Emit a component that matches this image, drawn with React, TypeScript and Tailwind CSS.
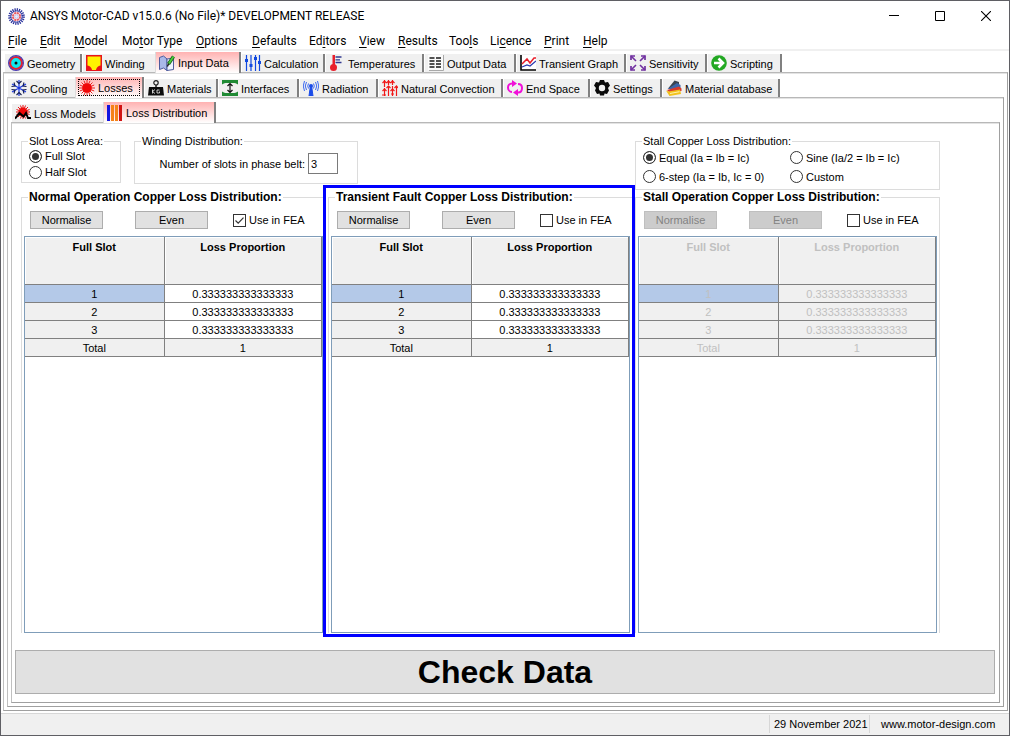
import { useState, type ReactNode } from "react";

type TabDef = { label: string; width: string; icon: ReactNode };

const Icon = ({ children }: { children: ReactNode }) => (
  <svg width="16" height="16" viewBox="0 0 16 16" fill="none" className="shrink-0" aria-hidden="true">
    {children}
  </svg>
);

const icons = {
  geometry: (
    <Icon>
      <circle cx="8" cy="8" r="6" fill="#10e8f0" stroke="#e8202c" strokeWidth="2.200" />
      <circle cx="8" cy="8" r="7.400" stroke="#4a3ab0" strokeWidth="1.200" />
      <circle cx="8" cy="8" r="1.500" fill="#111" />
    </Icon>
  ),
  winding: (
    <Icon>
      <path d="M0 0h16v16H0z" fill="#e8141c" />
      <path d="M1.500 1.500h13v9c-2.500 .5-4 2-4.500 4.500H6c-.5-2.500-2-4-4.500-4.500z" fill="#fff200" />
      <path d="M1 11.500c2.500 .5 4 1.500 4.500 3.500H1zM15 11.500c-2.500 .5-4 1.500-4.500 3.500H15z" fill="#e8141c" />
    </Icon>
  ),
  input: (
    <Icon>
      <path d="M.5 2.500l4-1.500 3.500 3v11.500l-3.500-2.500-4 1.500z" fill="#a9b8e8" stroke="#4c5a9c" />
      <path d="M8 4l6.500-1v11.500L8 15.500z" fill="#eef2ff" stroke="#4c5a9c" />
      <path d="M14.500 1.500L9.500 9" stroke="#1b5e20" strokeWidth="3.400" />
      <path d="M14.500 1.500L9.500 9" stroke="#4ccf3a" strokeWidth="1.800" />
      <path d="M9.800 8.500l-1.500 3" stroke="#222" strokeWidth="1.500" />
    </Icon>
  ),
  calculation: (
    <Icon>
      <path d="M1.500 0v16M6 0v16M10.500 0v16M14.500 0v16" stroke="#1048e0" strokeWidth="1.200" />
      <path d="M0 4h3v3H0zM4.500 9h3v3h-3zM9 2h3v3H9zM13 6h3v3h-3z" fill="#1048e0" />
    </Icon>
  ),
  temperatures: (
    <Icon>
      <path d="M3.500 0h2.500v11H3.500z" fill="#e8202c" />
      <circle cx="4.500" cy="12.500" r="3.500" fill="#e8202c" />
      <path d="M6.500 2h6M6.500 4.800h4.500M6.500 7.500h6" stroke="#303890" strokeWidth="1.300" />
    </Icon>
  ),
  output: (
    <Icon>
      <path d="M15.500 0v15.500H1" stroke="#a8a8a8" />
      <path d="M0 0h15v15H0z" fill="#fafafa" />
      <path d="M1.500 3h5M8 3h5M1.500 6h5M8 6h5M1.500 9h5M8 9h5M1.500 12h5M8 12h5" stroke="#181818" strokeWidth="1.700" />
    </Icon>
  ),
  transient: (
    <Icon>
      <path d="M0 0h16v16H0z" fill="#fff" />
      <path d="M1 0v15h15" stroke="#000" strokeWidth="1.600" />
      <path d="M2 12l5-2 3 1 6-5" stroke="#2838b0" strokeWidth="1.200" />
      <path d="M2 9l5-5 3 4 4-5h2" stroke="#e8202c" strokeWidth="1.500" />
    </Icon>
  ),
  sensitivity: (
    <Icon>
      <path d="M1 5V1h4M11 1h4v4M15 11v4h-4M5 15H1v-4" stroke="#7030a0" strokeWidth="1.700" />
      <path d="M1 1l5 5M15 1l-5 5M15 15l-5-5M1 15l5-5" stroke="#7030a0" strokeWidth="1.600" />
    </Icon>
  ),
  scripting: (
    <Icon>
      <circle cx="8" cy="8" r="7.800" fill="#23a823" />
      <path d="M3 8h8M7.500 3.500L12 8l-4.500 4.500" stroke="#fff" strokeWidth="2.600" />
    </Icon>
  ),
  cooling: (
    <Icon>
      <path d="M8 0v16M1 4l14 8M15 4L1 12" stroke="#1c38e0" strokeWidth="1.200" />
      <path d="M5.500 1L8 3.500 10.500 1M5.500 15L8 12.500l2.500 2.500M.5 6.500L4 6 3 2.500M15.500 9.500L12 10l1 3.500M15.500 6.500L12 6l1-3.500M.5 9.500L4 10l-1 3.500" stroke="#111c50" strokeWidth="1.100" />
    </Icon>
  ),
  losses: (
    <Icon>
      <path d="M8 0v16M0 8h16M2.500 2.500l11 11M13.500 2.500l-11 11M5 .8l6 14.400M11 .8L5 15.200M.8 5l14.400 6M.8 11l14.400-6" stroke="#e81010" strokeWidth=".9" />
      <circle cx="8" cy="8" r="4.800" fill="#f00808" />
    </Icon>
  ),
  materials: (
    <Icon>
      <circle cx="8" cy="2.800" r="2.200" stroke="#222" strokeWidth="1.200" />
      <path d="M8 5v3" stroke="#222" strokeWidth="1.500" />
      <path d="M1 7h14l1 8.500H0z" fill="#0c0c0c" />
      <path d="M4.500 9.500v4M7 9.500l-2.500 2 2.500 2M11.500 10H9v3h2.500v-1.500" stroke="#ddd" strokeWidth=".9" />
    </Icon>
  ),
  interfaces: (
    <Icon>
      <path d="M0 0h16v4.500C14 3 13 3 11 3H5C3 3 2 3 0 4.500zM0 16h16v-4.500c-2 1.500-3 1.500-5 1.500H5c-2 0-3 0-5-1.500z" fill="#1f8a34" />
      <path d="M8 4v8M5.500 6L8 3.500 10.500 6M5.500 10L8 12.500l2.500-2.500" stroke="#111" strokeWidth="1.200" />
    </Icon>
  ),
  radiation: (
    <Icon>
      <circle cx="8" cy="6" r="2" fill="#1c4ce8" />
      <path d="M7.200 7.500h1.600l1.200 8.500H6z" fill="#1c4ce8" stroke="#1c4ce8" />
      <path d="M5.500 3.500q-1.500 2.500 0 5M10.500 3.500q1.500 2.500 0 5M3.500 2q-2.500 4 0 8M12.500 2q2.500 4 0 8M1.500 1q-2.500 5 0 10M14.500 1q2.500 5 0 10" stroke="#3c68f0" />
    </Icon>
  ),
  convection: (
    <Icon>
      <path d="M2.500 16V8M6.500 16V6M10.500 16V6M14.500 16V6M2.500 7V0M6.500 5V0M10.500 5V0" stroke="#f01818" strokeWidth="1.200" />
      <path d="M.5 3l2-2 2 2M4.500 3l2-2 2 2M8.500 3l2-2 2 2M.5 11l2-2 2 2M4.500 8l2-2 2 2M8.500 11l2-2 2 2M12.500 8l2-2 1.500 2M0 15h4M9 14h3" stroke="#f01818" strokeWidth="1.200" />
    </Icon>
  ),
  endSpace: (
    <Icon>
      <path d="M5 3.500C2.500 3.500 1 5.500 1 7.500S2.500 12 5 12M11 12.500c2.500 0 4-2 4-4.500S13.500 4 11 4" stroke="#f010d8" strokeWidth="2" />
      <path d="M5 0l5 3.500L5 7zM11 9l-5 3.500 5 3.500z" fill="#f010d8" />
    </Icon>
  ),
  settings: (
    <Icon>
      <path
        fillRule="evenodd"
        d="M6 0h4l1 2.500 3-.5 2 3.500-2 2.500 1 2.500-2 3.500-2.500-.5-.5 2H6l-.5-2-2.500 .5L1 10.500 2 8 0 5.500 2 2l3 .5zM8 4.800a3.200 3.200 0 100 6.400 3.200 3.200 0 000-6.400z"
        fill="#0a0a0a"
      />
    </Icon>
  ),
  database: (
    <Icon>
      <path d="M2 8.500L8.500 .5l4.500 1.500v5z" fill="#3a4450" />
      <path d="M1.500 9L11 3l3.500 2v4H4z" fill="#3c66a8" />
      <path d="M1 10L13 6.500l2.500 2V11L3 12z" fill="#d83a2c" />
      <path d="M0 10.500l2.500 1L14 9.500l1 4.500-11.500 2z" fill="#f2c21c" />
      <path d="M4 13.500l9.500-1.800" stroke="#fff3b0" />
    </Icon>
  ),
  lossModels: (
    <Icon>
      <path d="M8 0v14M1 7h14M3 2l10 10M13 2L3 12M5.500 .5l5 13M10.500 .5l-5 13M1.500 4.500l13 5M1.500 9.500l13-5" stroke="#e81010" strokeWidth="1" />
      <circle cx="8" cy="7" r="4.500" fill="#f00808" />
      <path d="M0 13.500L4.500 8l4 3.500 2.500-3.500L13 13h3" stroke="#000" strokeWidth="2" />
    </Icon>
  ),
  lossDistribution: (
    <Icon>
      <path d="M0 0h3v16H0z" fill="#1414e0" />
      <path d="M4 0h3v16H4zM8 0h3v16H8z" fill="#f58216" />
      <path d="M12 0h3v16h-3z" fill="#d01414" />
    </Icon>
  ),
};

const mainTabs: TabDef[] = [
  { label: "Geometry", width: "w-[78px]", icon: icons.geometry },
  { label: "Winding", width: "w-[73px]", icon: icons.winding },
  { label: "Input Data", width: "w-[86px]", icon: icons.input },
  { label: "Calculation", width: "w-[84px]", icon: icons.calculation },
  { label: "Temperatures", width: "w-[99px]", icon: icons.temperatures },
  { label: "Output Data", width: "w-[92px]", icon: icons.output },
  { label: "Transient Graph", width: "w-[110px]", icon: icons.transient },
  { label: "Sensitivity", width: "w-[81px]", icon: icons.sensitivity },
  { label: "Scripting", width: "w-[75px]", icon: icons.scripting },
];

const inputTabs: TabDef[] = [
  { label: "Cooling", width: "w-[68px]", icon: icons.cooling },
  { label: "Losses", width: "w-[69px]", icon: icons.losses },
  { label: "Materials", width: "w-[74px]", icon: icons.materials },
  { label: "Interfaces", width: "w-[81px]", icon: icons.interfaces },
  { label: "Radiation", width: "w-[79px]", icon: icons.radiation },
  { label: "Natural Convection", width: "w-[125px]", icon: icons.convection },
  { label: "End Space", width: "w-[87px]", icon: icons.endSpace },
  { label: "Settings", width: "w-[72px]", icon: icons.settings },
  { label: "Material database", width: "w-[118px]", icon: icons.database },
];

const lossTabs: TabDef[] = [
  { label: "Loss Models", width: "w-[92px]", icon: icons.lossModels },
  { label: "Loss Distribution", width: "w-[113px]", icon: icons.lossDistribution },
];

const menus: { before: string; key: string; after: string; width: string }[] = [
  { before: "", key: "F", after: "ile", width: "w-8" },
  { before: "", key: "E", after: "dit", width: "w-[34px]" },
  { before: "", key: "M", after: "odel", width: "w-12" },
  { before: "Mo", key: "t", after: "or Type", width: "w-[74px]" },
  { before: "", key: "O", after: "ptions", width: "w-14" },
  { before: "", key: "D", after: "efaults", width: "w-[57px]" },
  { before: "Ed", key: "i", after: "tors", width: "w-[50px]" },
  { before: "", key: "V", after: "iew", width: "w-[39px]" },
  { before: "", key: "R", after: "esults", width: "w-[51px]" },
  { before: "Too", key: "l", after: "s", width: "w-[41px]" },
  { before: "Li", key: "c", after: "ence", width: "w-[54px]" },
  { before: "", key: "P", after: "rint", width: "w-[39px]" },
  { before: "", key: "H", after: "elp", width: "w-10" },
];

function TabRow({ tabs, initial, height, focused }: { tabs: TabDef[]; initial: number; height: string; focused?: boolean }) {
  const [active, setActive] = useState(initial);
  return (
    <div role="tablist" className={`flex items-end ${height}`}>
      {tabs.map((tab, i) => {
        const selected = i === active;
        return (
          <button
            key={tab.label}
            type="button"
            role="tab"
            aria-selected={selected}
            onClick={() => setActive(i)}
            className={`flex shrink-0 items-center gap-[3px] border-l pl-[3px] whitespace-nowrap ${tab.width} ${
              selected
                ? "relative -mb-px h-[21px] border-r-2 border-l-[#dcdcdc] border-r-[#808080] bg-linear-to-b from-[#ffb2b2] to-white"
                : i === active - 1
                  ? "h-[18px] border-l-white bg-[#f0f0f0]"
                  : "h-[18px] border-r-2 border-l-white border-r-[#808080] bg-[#f0f0f0]"
            }`}
          >
            {tab.icon}
            <span className="pt-px">{tab.label}</span>
            {selected && focused && (
              <span className="absolute inset-x-[2px] top-[2px] bottom-[2px] border border-dotted border-black" />
            )}
          </button>
        );
      })}
    </div>
  );
}

function Page({ children }: { children: ReactNode }) {
  return (
    <div className="flex flex-1 flex-col border border-t-[#b8b8b8] border-r-[#a0a0a0] border-b-[#a0a0a0] border-l-[#c0c0c0] shadow-[inset_0_1px_0_#e3e3e3]">
      {children}
    </div>
  );
}

function Radio({ name, label, defaultChecked }: { name: string; label: string; defaultChecked?: boolean }) {
  return (
    <label className="flex items-center gap-[3px]">
      <input
        type="radio"
        name={name}
        defaultChecked={defaultChecked}
        className="size-[13px] appearance-none rounded-full border border-[#333] bg-white checked:bg-[#333] checked:shadow-[inset_0_0_0_2px_#fff]"
      />
      {label}
    </label>
  );
}

function GroupBox({ title, bold, className, children }: { title: string; bold?: boolean; className: string; children: ReactNode }) {
  return (
    <fieldset className={`min-w-0 border border-[#dcdcdc] ${className}`}>
      <legend className={`ml-[6px] px-px leading-[14px] whitespace-nowrap ${bold ? "text-[12px] font-bold" : ""}`}>{title}</legend>
      {children}
    </fieldset>
  );
}

const rows = [
  ["1", "0.333333333333333"],
  ["2", "0.333333333333333"],
  ["3", "0.333333333333333"],
];

function LossPanel({ title, useInFea, disabled, highlighted }: { title: string; useInFea?: boolean; disabled?: boolean; highlighted?: boolean }) {
  const button =
    "h-[18px] w-[73px] border border-[#adadad] bg-[#e1e1e1] disabled:border-[#bfbfbf] disabled:bg-[#cccccc] disabled:text-[#838383]";
  return (
    <div className="relative flex flex-col">
      <GroupBox title={title} bold className="flex flex-1 flex-col border-b-0">
        <div className="flex h-8 items-center pl-2">
          <button type="button" disabled={disabled} className={button}>
            Normalise
          </button>
          <button type="button" disabled={disabled} className={`ml-8 ${button}`}>
            Even
          </button>
          <label className="relative ml-[25px] flex items-center gap-[3px]">
            <input type="checkbox" defaultChecked={useInFea} className="peer size-[13px] appearance-none border border-[#333] bg-white" />
            <svg width="13" height="13" viewBox="0 0 13 13" fill="none" className="absolute left-0 hidden peer-checked:block" aria-hidden="true">
              <path d="M2.500 6.500l2.700 2.700 5.300-5.500" stroke="#333" strokeWidth="1.200" />
            </svg>
            Use in FEA
          </label>
        </div>
        <div className={`mx-[2px] flex-1 border border-[#7f9db9] bg-white ${disabled ? "text-[#c0c0c0]" : ""}`}>
          <table className="w-full table-fixed border-separate border-spacing-0 text-center">
            <thead>
              <tr className="h-12 bg-[#f0f0f0] align-top">
                <th className="w-[47%] border-r border-b border-[#808080] p-0 pt-[3px] leading-[14px] shadow-[inset_1px_1px_0_#fff]">Full Slot</th>
                <th className="border-r border-b border-[#808080] p-0 pt-[3px] leading-[14px] shadow-[inset_1px_1px_0_#fff]">Loss Proportion</th>
              </tr>
            </thead>
            <tbody>
              {rows.map(([slot, value], i) => (
                <tr key={slot} className="h-[18px]">
                  <td className={`border-r border-b border-[#808080] p-0 pt-[2px] leading-[15px] ${i === 0 ? "bg-[#b4c9e8]" : "bg-[#f0f0f0]"}`}>{slot}</td>
                  <td className={`border-r border-b border-[#808080] p-0 pt-[2px] leading-[15px] ${disabled ? "bg-[#f0f0f0]" : "bg-white"}`}>{value}</td>
                </tr>
              ))}
              <tr className="h-[18px] bg-[#f0f0f0]">
                <td className="border-r border-b border-[#808080] p-0 pt-[2px] leading-[15px]">Total</td>
                <td className="border-r border-b border-[#808080] p-0 pt-[2px] leading-[15px]">1</td>
              </tr>
            </tbody>
          </table>
        </div>
      </GroupBox>
      {highlighted && <div className="pointer-events-none absolute -top-[5px] -right-[2px] -bottom-[4px] -left-[5px] z-10 border-3 border-[#0000ff]" />}
    </div>
  );
}

export default function App() {
  return (
    <div className="flex min-h-screen flex-col border border-[#5f5f64] bg-white font-['Liberation_Sans',Arial,sans-serif] text-[11px] leading-[14px] text-black">
      <header className="font-[Roboto,'Segoe_UI',sans-serif] text-[12px] leading-4">
        <div className="flex h-[30px] items-center pl-[7px]">
          <svg width="17" height="17" viewBox="0 0 17 17" fill="none" aria-hidden="true">
            <circle cx="8.500" cy="8.500" r="6.800" stroke="#28309c" strokeWidth="3" strokeDasharray="1.200 .936" />
            <circle cx="8.500" cy="8.500" r="5.600" stroke="#28309c" strokeWidth=".8" />
            <circle cx="8.500" cy="8.500" r="3.600" fill="#fff" stroke="#e86068" strokeWidth="2" strokeDasharray="2.200 .600" />
            <circle cx="8.500" cy="8.500" r="1.800" fill="#e8ecff" stroke="#b0b8e8" strokeWidth=".8" />
          </svg>
          <h1 className="ml-[5px]">ANSYS Motor-CAD v15.0.6 (No File)* DEVELOPMENT RELEASE</h1>
          <div className="ml-auto flex h-full">
            <button type="button" aria-label="Minimise" className="flex w-[46px] items-center justify-center">
              <svg width="10" height="10" viewBox="0 0 10 10" aria-hidden="true">
                <path d="M0 4.500h10" stroke="#000" />
              </svg>
            </button>
            <button type="button" aria-label="Maximise" className="flex w-[46px] items-center justify-center">
              <svg width="10" height="10" viewBox="0 0 10 10" fill="none" aria-hidden="true">
                <path d="M.5 .5h9v9h-9z" stroke="#000" />
              </svg>
            </button>
            <button type="button" aria-label="Close" className="flex w-[46px] items-center justify-center">
              <svg width="10" height="10" viewBox="0 0 10 10" aria-hidden="true">
                <path d="M0 0l10 10M10 0L0 10" stroke="#000" strokeWidth="1.100" />
              </svg>
            </button>
          </div>
        </div>
        <nav className="flex h-5 items-center border-b-2 border-[#f0f0f0] pt-[2px] pl-[7px]">
          {menus.map((m) => (
            <button key={m.before + m.key + m.after} type="button" className={`shrink-0 text-left whitespace-nowrap ${m.width}`}>
              {m.before}
              <span className="underline underline-offset-2">{m.key}</span>
              {m.after}
            </button>
          ))}
        </nav>
      </header>

      <main className="flex flex-1 flex-col px-[2px] pr-px pb-[2px]">
        <div className="pl-px">
          <TabRow tabs={mainTabs} initial={2} height="h-[21px]" />
        </div>
        <Page>
          <div className="flex flex-1 flex-col px-[3px] pb-[3px]">
            <TabRow tabs={inputTabs} initial={1} height="h-6" focused />
            <Page>
              <div className="flex flex-1 flex-col px-[3px] pb-[3px]">
                <TabRow tabs={lossTabs} initial={1} height="h-6" />
                <Page>
                  <div className="grid h-[67px] grid-cols-3 gap-[2px] pt-[11px] pr-[59px] pl-[9px]">
                    <div className="col-span-2 flex items-start gap-[13px]">
                      <GroupBox title="Slot Loss Area:" className="w-[100px] pb-[2px]">
                        <div className="grid auto-rows-[16px] pl-[7px]">
                          <Radio name="area" label="Full Slot" defaultChecked />
                          <Radio name="area" label="Half Slot" />
                        </div>
                      </GroupBox>
                      <GroupBox title="Winding Distribution:" className="w-[224px] pb-[9px]">
                        <label className="flex items-center justify-end gap-[3px] pt-[5px] pr-[19px]">
                          Number of slots in phase belt:
                          <input type="text" defaultValue="3" className="h-[21px] w-[30px] border border-[#7a7a7a] bg-white pl-[2px]" />
                        </label>
                      </GroupBox>
                    </div>
                    <div>
                      <GroupBox title="Stall Copper Loss Distribution:" className="pb-[3px]">
                        <div className="grid auto-rows-[19px] grid-cols-[147px_1fr] pl-[7px] whitespace-nowrap">
                          <Radio name="stall" label="Equal (Ia = Ib = Ic)" defaultChecked />
                          <Radio name="stall" label="Sine (Ia/2 = Ib = Ic)" />
                          <Radio name="stall" label="6-step (Ia = Ib, Ic = 0)" />
                          <Radio name="stall" label="Custom" />
                        </div>
                      </GroupBox>
                    </div>
                  </div>
                  <div className="grid flex-1 grid-cols-3 gap-[2px] pr-[59px] pl-[9px]">
                    <LossPanel title="Normal Operation Copper Loss Distribution:" useInFea />
                    <LossPanel title="Transient Fault Copper Loss Distribution:" highlighted />
                    <LossPanel title="Stall Operation Copper Loss Distribution:" disabled />
                  </div>
                  <div className="pt-[17px] pr-1 pb-2 pl-[3px]">
                    <button type="button" className="h-11 w-full border border-[#adadad] bg-[#e1e1e1] text-[32px] font-bold">
                      Check Data
                    </button>
                  </div>
                </Page>
              </div>
            </Page>
          </div>
        </Page>
      </main>

      <footer className="flex h-[22px] items-stretch justify-end border-t border-[#d7d7d7] bg-[#f0f0f0] pt-px pb-[2px]">
        <span className="flex w-[100px] items-center border-l border-[#d7d7d7] pl-1">29 November 2021</span>
        <a href="https://www.motor-design.com" className="flex w-[140px] items-center border-l border-[#d7d7d7] pl-[11px]">
          www.motor-design.com
        </a>
      </footer>
    </div>
  );
}
